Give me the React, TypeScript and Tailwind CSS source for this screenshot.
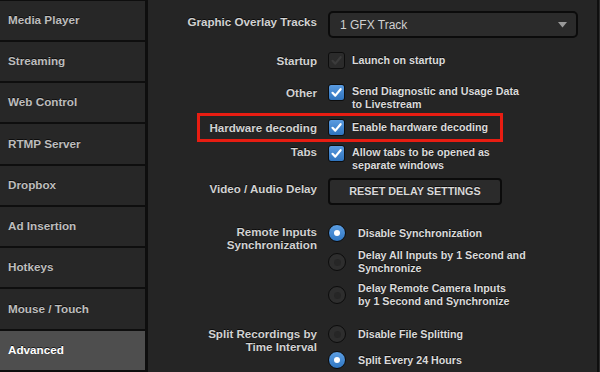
const navItems = [
  "Media Player",
  "Streaming",
  "Web Control",
  "RTMP Server",
  "Dropbox",
  "Ad Insertion",
  "Hotkeys",
  "Mouse / Touch",
  "Advanced",
];

function CheckBox({ on = true }: { on?: boolean }) {
  return (
    <div
      className={`w-[17px] h-[17px] shrink-0 rounded-[3px] border-[1.5px] border-[#0d0d0d] flex items-center justify-center ${
        on ? "bg-gradient-to-b from-[#5a9be0] to-[#2f73bd]" : "bg-[#2b2b2b]"
      }`}
    >
      <svg width="13" height="13" viewBox="0 0 13 13">
        <path
          d="M2.5 6.8 L5.3 9.6 L10.6 3.2"
          fill="none"
          stroke={on ? "#ffffff" : "#3b3b3b"}
          strokeWidth="2.2"
          strokeLinecap="round"
          strokeLinejoin="round"
        />
      </svg>
    </div>
  );
}

function Radio({ on = false }: { on?: boolean }) {
  return (
    <div
      className={`w-[18px] h-[18px] shrink-0 rounded-full border-[1.5px] border-[#0c0c0c] flex items-center justify-center ${
        on ? "bg-gradient-to-b from-[#5c9ee2] to-[#3077c3]" : "bg-[#2e2e2e]"
      }`}
    >
      <div className={`rounded-full ${on ? "w-[6px] h-[6px] bg-white" : "w-[7px] h-[7px] bg-[#262626]"}`} />
    </div>
  );
}

function Label({ children, className = "" }: { children: React.ReactNode; className?: string }) {
  return (
    <div
      className={`w-[169px] shrink-0 text-right text-[11.6px] font-bold text-[#d2d2d2] [text-shadow:0_-1px_0_rgba(0,0,0,0.7)] ${className}`}
    >
      {children}
    </div>
  );
}

function OptText({ children, className = "" }: { children: React.ReactNode; className?: string }) {
  return (
    <div className={`text-[10.7px] font-bold leading-[13px] text-[#dadada] [text-shadow:0_-1px_0_rgba(0,0,0,0.7)] ${className}`}>
      {children}
    </div>
  );
}

export default function App() {
  return (
    <div
      className="w-[600px] h-[372px] overflow-hidden flex bg-[#2b2b2b]"
      style={{ fontFamily: '"Liberation Sans", Arial, sans-serif' }}
    >
      {/* Sidebar */}
      <div className="w-[145px] shrink-0 bg-[#0e0e0e] pt-[0.5px] flex flex-col">
        {navItems.map((item) => {
          const active = item === "Advanced";
          return (
            <div
              key={item}
              className={`h-[41.25px] shrink-0 border-b-2 border-[#0e0e0e] flex items-center pl-[8px] pb-[1px] text-[11.7px] font-bold [text-shadow:0_-1px_0_rgba(0,0,0,0.7)] ${
                active ? "bg-[#4e4e4e] text-white" : "bg-[#272727] text-[#bdbdbd]"
              }`}
            >
              {item}
            </div>
          );
        })}
      </div>
      <div className="w-[3px] shrink-0 bg-[#0e0e0e]" />

      {/* Settings panel */}
      <div className="flex-1 bg-[#252525] border-r-2 border-[#0f0f0f] mr-[1px] pt-[11px] flex flex-col">
        <div className="flex items-start">
          <Label className="pt-[2px] leading-[17px]">Graphic Overlay Tracks</Label>
          <div className="ml-[11px] w-[250px] h-[27px] rounded-[5px] border-2 border-[#0b0b0b] bg-[#2b2b2b] flex items-center justify-between pl-[10px] pr-[9px]">
            <span className="text-[12px] text-[#d0d0d0]">1 GFX Track</span>
            <svg width="9" height="6" viewBox="0 0 9 6">
              <path d="M0 0 H9 L4.5 5.5 Z" fill="#9a9a9a" />
            </svg>
          </div>
        </div>

        <div className="flex items-start mt-[14px]">
          <Label className="leading-[18px]">Startup</Label>
          <div className="ml-[11px] flex items-start gap-[7px]">
            <CheckBox on={false} />
            <OptText className="pt-[2px]">Launch on startup</OptText>
          </div>
        </div>

        <div className="flex items-start mt-[14px]">
          <Label className="leading-[18px]">Other</Label>
          <div className="ml-[11px] flex items-start gap-[7px]">
            <CheckBox />
            <OptText className="pt-[1px]">
              Send Diagnostic and Usage Data
              <br />
              to Livestream
            </OptText>
          </div>
        </div>

        <div className="relative flex items-start mt-[8px]">
          <div className="absolute left-[49px] top-[-6px] w-[306px] h-[29px] border-[3.5px] border-[#e81d12]" />
          <Label className="leading-[17px]">Hardware decoding</Label>
          <div className="ml-[11px] flex items-start gap-[7px]">
            <CheckBox />
            <OptText className="pt-[2px]">Enable hardware decoding</OptText>
          </div>
        </div>

        <div className="flex items-start mt-[9px]">
          <Label className="leading-[14px]">Tabs</Label>
          <div className="ml-[11px] flex items-start gap-[7px]">
            <CheckBox />
            <OptText className="pt-[1px]">
              Allow tabs to be opened as
              <br />
              separate windows
            </OptText>
          </div>
        </div>

        <div className="flex items-start mt-[6px]">
          <Label className="leading-[21px]">Video / Audio Delay</Label>
          <button className="ml-[11px] w-[174px] h-[27px] rounded-[4px] border-2 border-[#0b0b0b] bg-[#2b2b2b] text-[10.8px] font-bold text-[#d8d8d8] [text-shadow:0_-1px_0_rgba(0,0,0,0.7)]">
            RESET DELAY SETTINGS
          </button>
        </div>

        <div className="flex items-start mt-[19px]">
          <Label className="pt-[2px] leading-[12.5px]">
            Remote Inputs
            <br />
            Synchronization
          </Label>
          <div className="ml-[11px] flex flex-col gap-[7px]">
            <div className="flex items-center gap-[12px]">
              <Radio on />
              <OptText>Disable Synchronization</OptText>
            </div>
            <div className="flex items-center gap-[12px]">
              <Radio />
              <OptText>
                Delay All Inputs by 1 Second and
                <br />
                Synchronize
              </OptText>
            </div>
            <div className="flex items-center gap-[12px]">
              <Radio />
              <OptText>
                Delay Remote Camera Inputs
                <br />
                by 1 Second and Synchronize
              </OptText>
            </div>
          </div>
        </div>

        <div className="flex items-start mt-[17px]">
          <Label className="pt-[3px] leading-[12.5px]">
            Split Recordings by
            <br />
            Time Interval
          </Label>
          <div className="ml-[11px] flex flex-col gap-[8px]">
            <div className="flex items-center gap-[12px]">
              <Radio />
              <OptText>Disable File Splitting</OptText>
            </div>
            <div className="flex items-center gap-[12px]">
              <Radio on />
              <OptText>Split Every 24 Hours</OptText>
            </div>
          </div>
        </div>
      </div>
    </div>
  );
}
